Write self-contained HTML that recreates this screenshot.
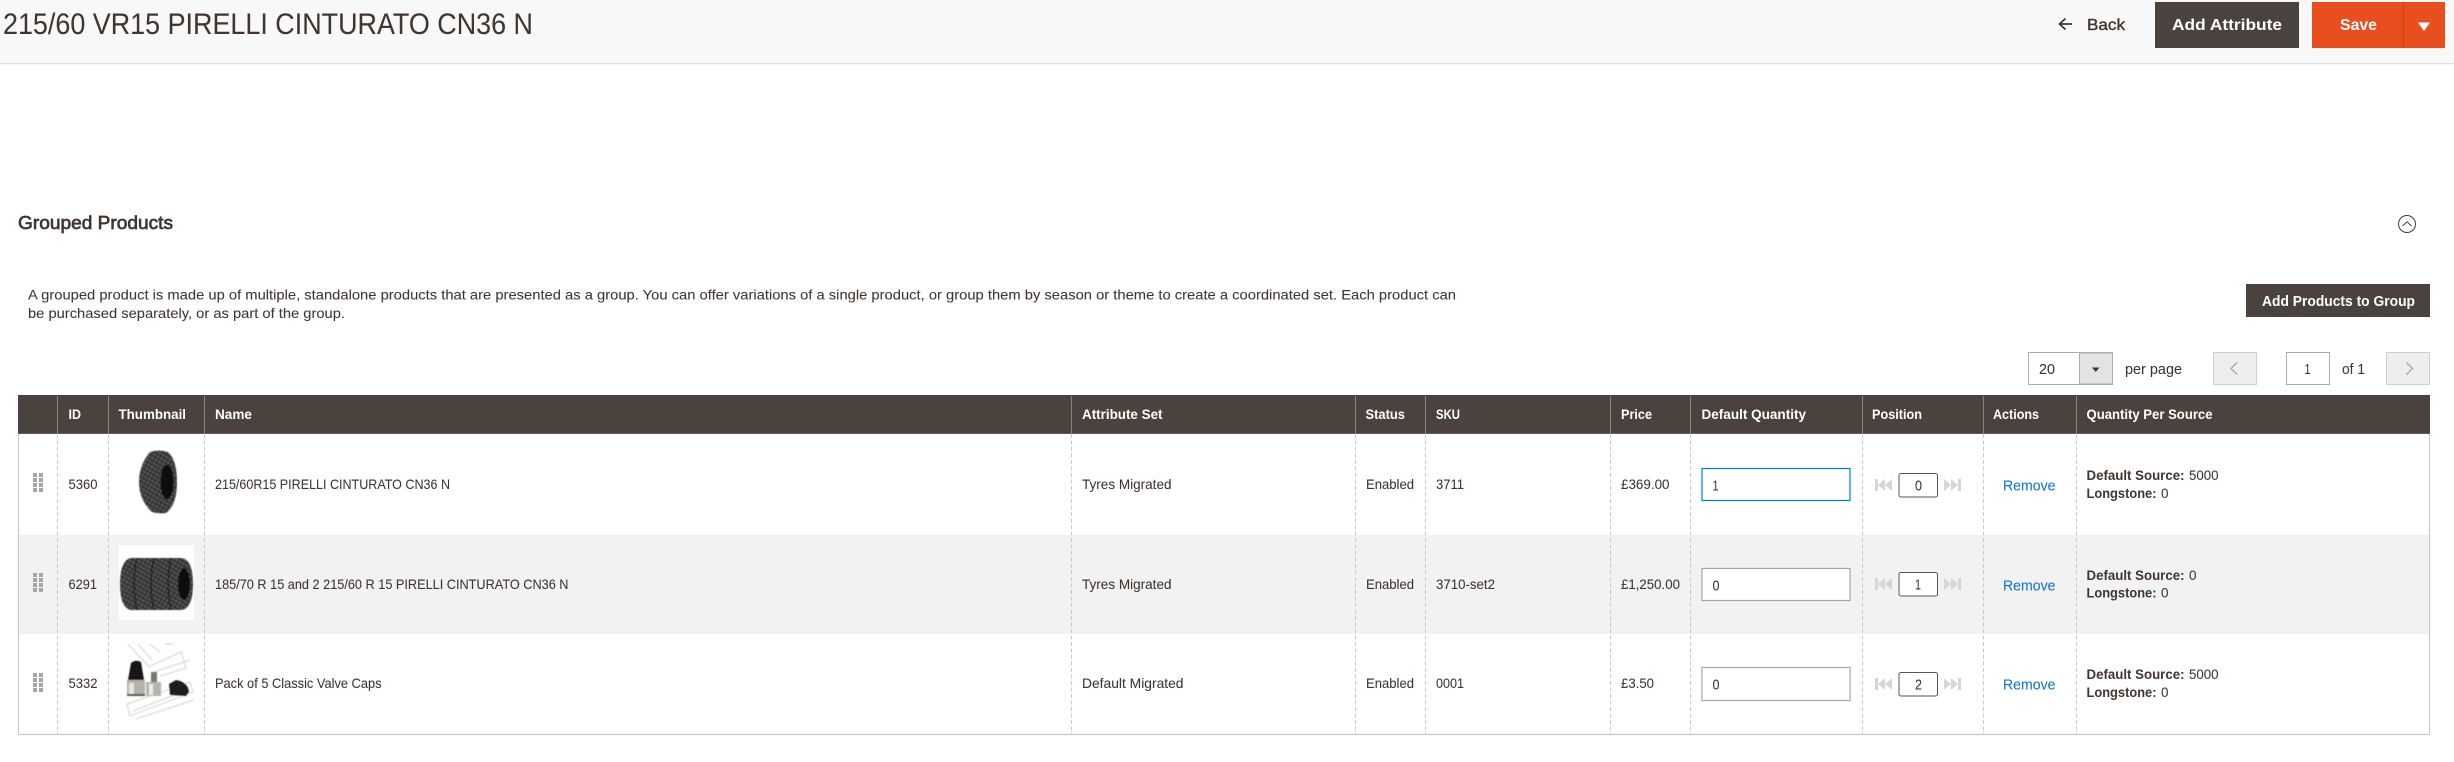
<!DOCTYPE html>
<html lang="en"><head><meta charset="utf-8"><title>215/60 VR15 PIRELLI CINTURATO CN36 N</title>
<style>
html,body{margin:0;padding:0;background:#fff;width:2454px;height:762px;overflow:hidden}
svg{display:block}
text{font-family:"Liberation Sans",Arial,sans-serif;fill:#41362f;stroke:#41362f;stroke-width:.06px;font-size:14px;}
.h{fill:#fff;stroke:none;font-weight:bold;font-size:14px}
.w{fill:#fff;stroke:none;font-weight:bold}
.sb{stroke-width:.4px}
.gp{stroke-width:.7px}
.b{font-weight:bold;stroke-width:0}
.l{fill:#0f74d1;stroke:#0f74d1;font-size:14.5px}
.d{stroke:#c9c9c9;stroke-width:1;stroke-dasharray:4 2.5;fill:none}
.hs{stroke:#8a827c;stroke-width:1.100}
.g{fill:#a6a6a6}
.nav{fill:#d6d6d6}
</style></head><body>
<svg width="2454" height="762" viewBox="0 0 2454 762" xmlns="http://www.w3.org/2000/svg">
<defs>
<pattern id="tread" width="4" height="4" patternUnits="userSpaceOnUse" patternTransform="rotate(30)">
<rect width="4" height="4" fill="#3e3e3e"/><rect x="0" y="0" width="2" height="1" fill="#6c6c6c"/><rect x="2" y="2" width="2" height="1" fill="#262626"/>
</pattern>
<filter id="soft" x="-10%" y="-10%" width="120%" height="120%"><feGaussianBlur stdDeviation=".55"/></filter>
<g id="grip">
<rect x="0" y="0" width="4" height="4" class="g"/><rect x="6" y="0" width="4" height="4" class="g"/>
<rect x="0" y="5" width="4" height="4" class="g"/><rect x="6" y="5" width="4" height="4" class="g"/>
<rect x="0" y="10" width="4" height="4" class="g"/><rect x="6" y="10" width="4" height="4" class="g"/>
<rect x="0" y="15" width="4" height="4" class="g"/><rect x="6" y="15" width="4" height="4" class="g"/>
</g>
<g id="navs">
<path class="nav" d="M1875 -6h3v12h-3zM1878 0l7-6v12zM1885 0l7-6v12z"/>
<path class="nav" d="M1944 -6l7 6-7 6zM1951 -6l7 6-7 6zM1958 -6h3v12h-3z"/>
</g>
</defs>

<!-- top bar -->
<rect x="0" y="0" width="2454" height="63" fill="#f8f8f8"/>
<rect x="0" y="63" width="2454" height="1.4" fill="#e3e3e3"/>
<text x="3" y="34" textLength="530" lengthAdjust="spacingAndGlyphs" style="font-size:30px">215/60 VR15 PIRELLI CINTURATO CN36 N</text>
<path d="M2072 24H2060M2065.500 18.500L2059.500 24L2065.500 29.500" fill="none" stroke="#41362f" stroke-width="1.800"/>
<text x="2087" y="30" textLength="38" lengthAdjust="spacingAndGlyphs" class="sb" style="font-size:16px">Back</text>
<rect x="2155" y="2" width="144" height="46" fill="#4a423c"/>
<text x="2172" y="30" textLength="110" lengthAdjust="spacingAndGlyphs" class="w" style="font-size:16px">Add Attribute</text>
<rect x="2312" y="2" width="133" height="46" fill="#e94e1f"/>
<rect x="2403" y="2" width="1" height="46" fill="#c8401a"/>
<text x="2340" y="30" textLength="37" lengthAdjust="spacingAndGlyphs" class="w" style="font-size:16px">Save</text>
<path d="M2418 22.500H2430L2424 31z" fill="#fff"/>

<!-- section header -->
<text x="18" y="229" textLength="155" lengthAdjust="spacingAndGlyphs" class="gp" style="font-size:18px">Grouped Products</text>
<circle cx="2407" cy="224" r="8.500" fill="none" stroke="#3d3d3d" stroke-width="1"/>
<path d="M2402.500 226L2407 221.800L2411.500 226" fill="none" stroke="#3d3d3d" stroke-width="1"/>
<text x="28" y="299.500" textLength="1428" lengthAdjust="spacingAndGlyphs">A grouped product is made up of multiple, standalone products that are presented as a group. You can offer variations of a single product, or group them by season or theme to create a coordinated set. Each product can</text>
<text x="28" y="318" textLength="317" lengthAdjust="spacingAndGlyphs">be purchased separately, or as part of the group.</text>
<rect x="2246" y="284" width="184" height="33" fill="#4a423c"/>
<text x="2262" y="306" textLength="153" lengthAdjust="spacingAndGlyphs" class="w" style="font-size:14.500px">Add Products to Group</text>

<!-- pager -->
<rect x="2028.500" y="352.500" width="84" height="32" fill="#fff" stroke="#adadad"/>
<rect x="2079.500" y="353" width="33" height="31" fill="#e3e3e3" stroke="#adadad"/>
<path d="M2092 367.500h7.500l-3.750 4.500z" fill="#41362f"/>
<text x="2039" y="374" textLength="16" lengthAdjust="spacingAndGlyphs" style="font-size:15px">20</text>
<text x="2125" y="374" textLength="57" lengthAdjust="spacingAndGlyphs" style="font-size:15px">per page</text>
<rect x="2213.500" y="352.500" width="43" height="32" fill="#eee" stroke="#cfcfcf"/>
<path d="M2237 362.500L2231 368.500L2237 374.500" fill="none" stroke="#a9a9a9" stroke-width="1.400"/>
<rect x="2286.500" y="352.500" width="43" height="32" fill="#fff" stroke="#adadad"/>
<text x="2304.500" y="374" textLength="6" lengthAdjust="spacingAndGlyphs" style="font-size:15px">1</text>
<text x="2342" y="374" textLength="23" lengthAdjust="spacingAndGlyphs" style="font-size:15px">of 1</text>
<rect x="2386.500" y="352.500" width="43" height="32" fill="#eee" stroke="#cfcfcf"/>
<path d="M2406.500 362.500L2412.500 368.500L2406.500 374.500" fill="none" stroke="#a9a9a9" stroke-width="1.400"/>

<!-- table -->
<rect x="18" y="395" width="2412" height="39" fill="#4a423c"/>
<rect x="18" y="433.500" width="2412" height="1" fill="#7d756f"/>
<rect x="18.500" y="434" width="2411" height="101" fill="#fff"/>
<rect x="18" y="535" width="2412" height="99" fill="#f2f2f2"/>
<path d="M18.500 434V734.500H2429.500V434" fill="none" stroke="#cbcbcb" stroke-width="1.200"/>

<path class="hs" d="M57.500 396V434M108.500 396V434M204.500 396V434M1071.500 396V434M1355.500 396V434M1425.500 396V434M1610.500 396V434M1690.500 396V434M1862.500 396V434M1983.500 396V434M2076.500 396V434"/>
<path class="d" d="M57.500 434V734M108.500 434V734M204.500 434V734M1071.500 434V734M1355.500 434V734M1425.500 434V734M1610.500 434V734M1690.500 434V734M1862.500 434V734M1983.500 434V734M2076.500 434V734"/>

<text class="h" x="68.500" y="419" textLength="12.500" lengthAdjust="spacingAndGlyphs">ID</text>
<text class="h" x="118.500" y="419" textLength="67.500" lengthAdjust="spacingAndGlyphs">Thumbnail</text>
<text class="h" x="215" y="419" textLength="37" lengthAdjust="spacingAndGlyphs">Name</text>
<text class="h" x="1082" y="419" textLength="80.500" lengthAdjust="spacingAndGlyphs">Attribute Set</text>
<text class="h" x="1365.500" y="419" textLength="39.500" lengthAdjust="spacingAndGlyphs">Status</text>
<text class="h" x="1436" y="419" textLength="24" lengthAdjust="spacingAndGlyphs">SKU</text>
<text class="h" x="1621" y="419" textLength="31" lengthAdjust="spacingAndGlyphs">Price</text>
<text class="h" x="1701.500" y="419" textLength="104.500" lengthAdjust="spacingAndGlyphs">Default Quantity</text>
<text class="h" x="1872" y="419" textLength="50" lengthAdjust="spacingAndGlyphs">Position</text>
<text class="h" x="1993" y="419" textLength="46" lengthAdjust="spacingAndGlyphs">Actions</text>
<text class="h" x="2086.500" y="419" textLength="126" lengthAdjust="spacingAndGlyphs">Quantity Per Source</text>

<!-- grips -->
<use href="#grip" x="33" y="473"/><use href="#grip" x="33" y="573"/><use href="#grip" x="33" y="673"/>

<!-- thumb 1 -->
<g filter="url(#soft)">
<path d="M150 452Q139 465 139 482Q139 500 152 512Q158 514 166 513Q177 505 177 482Q177 460 168 452Q158 449 150 452z" fill="url(#tread)"/>
<ellipse cx="167" cy="482" rx="6.500" ry="17" fill="#0f0f0f"/>
</g>
<!-- thumb 2 -->
<rect x="119" y="545" width="75" height="75" fill="#fff"/>
<g filter="url(#soft)">
<path d="M131 558H182Q193 560 193 584Q193 608 182 610H131Q120 608 120 584Q120 560 131 558z" fill="url(#tread)"/>
<path d="M137 558Q131 584 137 610M154 558Q148 584 154 610M171 558Q165 584 171 610" fill="none" stroke="#1f1f1f" stroke-width="1.300"/>
<ellipse cx="184" cy="584" rx="6" ry="16" fill="#0e0e0e"/>
</g>
<!-- thumb 3 -->
<g filter="url(#soft)">
<g fill="none" stroke="#d2d2d2" stroke-width="1">
<path d="M128 644L150 668M138 644L152 660M150 644L160 652M165 644h8"/>
<path d="M150 666L181 652L186 668L160 676"/>
<path d="M127 704L190 682L193 692L130 716z"/>
<path d="M133 711L185 691M136 719L194 700"/>
<path d="M154 672L190 660"/>
</g>
<path d="M128 680L131 663Q136 659 141 662L144 680z" fill="#141414"/>
<rect x="127" y="680" width="18" height="15" fill="#b5b0aa"/>
<rect x="129" y="683" width="5" height="11" fill="#e8e6e3"/>
<rect x="127" y="694" width="18" height="2" fill="#555"/>
<rect x="151" y="672" width="6" height="10" fill="#777"/>
<path d="M146 682H161V696H146z" fill="#b8b4ad"/>
<rect x="149" y="684" width="4" height="11" fill="#ededea"/>
<path d="M169 684L176 680Q188 682 189 692L186 696L170 695z" fill="#1c1c1c"/>
</g>

<!-- row 1 -->
<text x="68.500" y="489" textLength="29" lengthAdjust="spacingAndGlyphs">5360</text>
<text x="215" y="489" textLength="235" lengthAdjust="spacingAndGlyphs">215/60R15 PIRELLI CINTURATO CN36 N</text>
<text x="1082" y="489" textLength="89.500" lengthAdjust="spacingAndGlyphs">Tyres Migrated</text>
<text x="1366" y="489" textLength="48" lengthAdjust="spacingAndGlyphs">Enabled</text>
<text x="1436" y="489" textLength="28" lengthAdjust="spacingAndGlyphs">3711</text>
<text x="1621" y="489" textLength="48.500" lengthAdjust="spacingAndGlyphs">£369.00</text>
<rect x="1702" y="468.500" width="148" height="32" fill="#fff" stroke="#007bdb" stroke-width="1.200"/>
<text x="1712.500" y="490.500" textLength="6" lengthAdjust="spacingAndGlyphs" style="font-size:15px">1</text>
<use href="#navs" x="0" y="485"/>
<rect x="1899" y="473.500" width="38.500" height="23.500" rx="2" fill="#fff" stroke="#555" stroke-width="1"/>
<text x="1915" y="490.500" textLength="7" lengthAdjust="spacingAndGlyphs" style="font-size:15px">0</text>
<text class="l" x="2003" y="490.500" textLength="52.500" lengthAdjust="spacingAndGlyphs">Remove</text>
<text x="2086.500" y="480" class="b" textLength="98" lengthAdjust="spacingAndGlyphs">Default Source:</text>
<text x="2189" y="480" textLength="29.500" lengthAdjust="spacingAndGlyphs">5000</text>
<text x="2086.500" y="498" class="b" textLength="70" lengthAdjust="spacingAndGlyphs">Longstone:</text>
<text x="2161" y="498" textLength="7.500" lengthAdjust="spacingAndGlyphs">0</text>

<!-- row 2 -->
<text x="68.500" y="589" textLength="28.500" lengthAdjust="spacingAndGlyphs">6291</text>
<text x="215" y="589" textLength="353.500" lengthAdjust="spacingAndGlyphs">185/70 R 15 and 2 215/60 R 15 PIRELLI CINTURATO CN36 N</text>
<text x="1082" y="589" textLength="89.500" lengthAdjust="spacingAndGlyphs">Tyres Migrated</text>
<text x="1366" y="589" textLength="48" lengthAdjust="spacingAndGlyphs">Enabled</text>
<text x="1436" y="589" textLength="59" lengthAdjust="spacingAndGlyphs">3710-set2</text>
<text x="1621" y="589" textLength="59" lengthAdjust="spacingAndGlyphs">£1,250.00</text>
<rect x="1702" y="568.500" width="148" height="32" fill="#fff" stroke="#a6a6a6" stroke-width="1.200"/>
<text x="1712.500" y="590.500" textLength="7" lengthAdjust="spacingAndGlyphs" style="font-size:15px">0</text>
<use href="#navs" x="0" y="584"/>
<rect x="1899" y="572.500" width="38.500" height="23.500" rx="2" fill="#fff" stroke="#555" stroke-width="1"/>
<text x="1915" y="589.500" textLength="6" lengthAdjust="spacingAndGlyphs" style="font-size:15px">1</text>
<text class="l" x="2003" y="590.500" textLength="52.500" lengthAdjust="spacingAndGlyphs">Remove</text>
<text x="2086.500" y="580" class="b" textLength="98" lengthAdjust="spacingAndGlyphs">Default Source:</text>
<text x="2189" y="580" textLength="7.500" lengthAdjust="spacingAndGlyphs">0</text>
<text x="2086.500" y="597.500" class="b" textLength="70" lengthAdjust="spacingAndGlyphs">Longstone:</text>
<text x="2161" y="597.500" textLength="7.500" lengthAdjust="spacingAndGlyphs">0</text>

<!-- row 3 -->
<text x="68.500" y="688" textLength="29" lengthAdjust="spacingAndGlyphs">5332</text>
<text x="215" y="688" textLength="166.500" lengthAdjust="spacingAndGlyphs">Pack of 5 Classic Valve Caps</text>
<text x="1082" y="688" textLength="101.500" lengthAdjust="spacingAndGlyphs">Default Migrated</text>
<text x="1366" y="688" textLength="48" lengthAdjust="spacingAndGlyphs">Enabled</text>
<text x="1436" y="688" textLength="28" lengthAdjust="spacingAndGlyphs">0001</text>
<text x="1621" y="688" textLength="33" lengthAdjust="spacingAndGlyphs">£3.50</text>
<rect x="1702" y="667.500" width="148" height="33" fill="#fff" stroke="#a6a6a6" stroke-width="1.200"/>
<text x="1712.500" y="689.500" textLength="7" lengthAdjust="spacingAndGlyphs" style="font-size:15px">0</text>
<use href="#navs" x="0" y="684"/>
<rect x="1899" y="672.500" width="38.500" height="23.500" rx="2" fill="#fff" stroke="#555" stroke-width="1"/>
<text x="1915" y="689.500" textLength="7" lengthAdjust="spacingAndGlyphs" style="font-size:15px">2</text>
<text class="l" x="2003" y="689.500" textLength="52.500" lengthAdjust="spacingAndGlyphs">Remove</text>
<text x="2086.500" y="679" class="b" textLength="98" lengthAdjust="spacingAndGlyphs">Default Source:</text>
<text x="2189" y="679" textLength="29.500" lengthAdjust="spacingAndGlyphs">5000</text>
<text x="2086.500" y="697" class="b" textLength="70" lengthAdjust="spacingAndGlyphs">Longstone:</text>
<text x="2161" y="697" textLength="7.500" lengthAdjust="spacingAndGlyphs">0</text>
</svg>
</body></html>
